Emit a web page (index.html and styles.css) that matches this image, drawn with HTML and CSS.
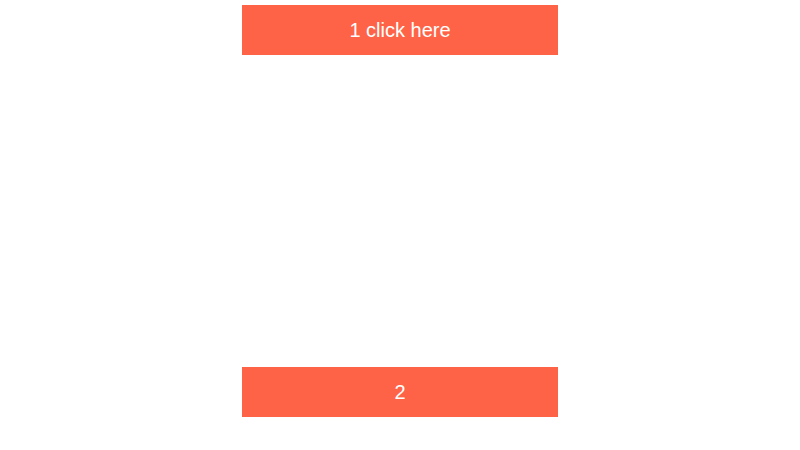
FILE: index.html
```html
<!DOCTYPE html>
<html>
<head>
<meta charset="utf-8">
<link rel="stylesheet" href="styles.css">
</head>
<body>
<div class="wrap">
  <div class="box">1 click here</div>
  <div class="box second">2</div>
</div>
</body>
</html>
```
FILE: styles.css
```css
html, body { margin: 0; padding: 0; background: #fff; }
.wrap {
  width: 316px;
  margin: 0 auto;
  padding-top: 5px;
  display: flex;
  flex-direction: column;
}
.box {
  height: 50px;
  background: #ff6347;
  color: #fff;
  font-family: "Liberation Sans", Arial, sans-serif;
  font-size: 20px;
  display: flex;
  align-items: center;
  justify-content: center;
}
.second { margin-top: 312px; }
```
